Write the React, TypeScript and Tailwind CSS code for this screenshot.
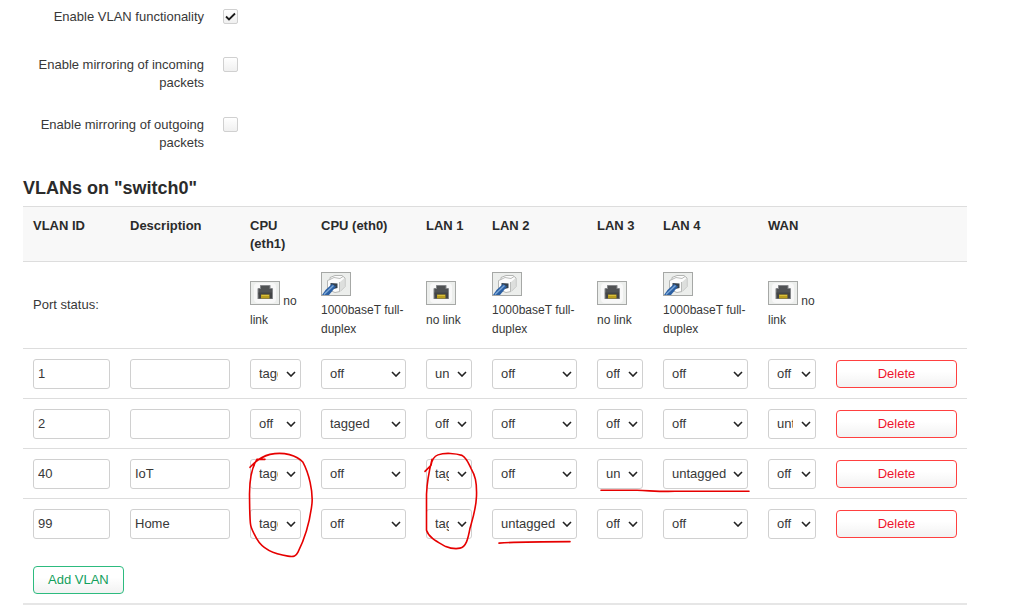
import { useState } from 'react';

const options = ['off', 'untagged', 'tagged'];

const mirrorSettings = [
    { id: 'enable-vlan', label: 'Enable VLAN functionality', checked: true },
    { id: 'mirror-in', label: 'Enable mirroring of incoming packets', checked: false },
    { id: 'mirror-out', label: 'Enable mirroring of outgoing packets', checked: false },
];

const ports = [
    { name: 'CPU (eth1)', up: false, inlineText: true },
    { name: 'CPU (eth0)', up: true },
    { name: 'LAN 1', up: false },
    { name: 'LAN 2', up: true },
    { name: 'LAN 3', up: false },
    { name: 'LAN 4', up: true },
    { name: 'WAN', up: false, inlineText: true },
];

const vlans = [
    { id: '1', description: '', ports: ['tagged', 'off', 'untagged', 'off', 'off', 'off', 'off'] },
    { id: '2', description: '', ports: ['off', 'tagged', 'off', 'off', 'off', 'off', 'untagged'] },
    { id: '40', description: 'IoT', ports: ['tagged', 'off', 'tagged', 'off', 'untagged', 'untagged', 'off'] },
    { id: '99', description: 'Home', ports: ['tagged', 'off', 'tagged', 'untagged', 'off', 'off', 'off'] },
];

function PortDownIcon() {
    return (
        <svg width="30" height="24" viewBox="0 0 30 24" className="inline-block align-baseline" aria-hidden="true">
            <rect x="0.5" y="0.5" width="29" height="23" fill="#eceeec" stroke="#a6a8a6" />
            <rect x="4" y="2" width="22" height="20" rx="4" fill="#f8f8f8" />
            <path d="M10 4.500q0-.5.500-.5h9.500q.5 0 .5.500V7h1.500q1 0 1 1v10h-15.500V8q0-1 1-1H10z" fill="#85878a" />
            <path d="M11 5h8.500v3h2.500v5.500H8.500V8H11z" fill="#505254" />
            <path d="M8.500 11.500h13.500v6H8.500z" fill="#434446" />
            <path d="M11 13.500h8.500v4H11z" fill="#b99d1e" />
            <path d="M11.500 14.500h7.500" stroke="#d9bf3c" />
        </svg>
    );
}

function PortUpIcon() {
    return (
        <svg width="30" height="24" viewBox="0 0 30 24" className="block" aria-hidden="true">
            <rect x="0.5" y="0.5" width="29" height="23" fill="#eceeec" stroke="#a6a8a6" />
            <path d="M6.500 10V8.500L9 7.500V5.500l5-2 7 0 3 2.500v8.500l-5 5-5 1-7.500-3z" fill="#fcfcfc" stroke="#b4b6b4" />
            <path d="M18.500 10.500l4.500-4v8l-4.500 5z" fill="#dddfdd" />
            <path d="M9 7.500l4-2 6 1 3-2M18.500 10v9" fill="none" stroke="#b9bbb9" />
            <path d="M9.500 11l7 .5v4.500l-4 1-3-2z" fill="#35404c" />
            <path d="M1 23l3.500-5L11 12l4 2.500L8 23z" fill="#2a5fa3" />
            <path d="M3 22.500l9.500-9" stroke="#7ba6d6" strokeWidth="1.500" />
        </svg>
    );
}

function PortStatus({ up, inlineText }: { up: boolean; inlineText?: boolean }) {
    if (up) {
        return (
            <>
                <PortUpIcon />
                <div className="pt-[5px]">1000baseT full-<br />duplex</div>
            </>
        );
    }
    return (
        <div className="whitespace-nowrap">
            <PortDownIcon />
            {inlineText ? <> no<br />link</> : <><br />no link</>}
        </div>
    );
}

function PortSelect({ value, label, narrow }: { value: string; label: string; narrow: boolean }) {
    return (
        <div className="relative">
            <select
                aria-label={label}
                defaultValue={value}
                className={`block h-[30px] w-full appearance-none rounded-[3px] border border-[#d0d0d0] bg-white pl-2 text-[#383838] ${narrow ? 'pr-[22px]' : 'pr-4'}`}
            >
                {options.map((option) => (
                    <option key={option} value={option}>{option}</option>
                ))}
            </select>
            <svg
                width="10"
                height="6"
                viewBox="0 0 10 6"
                className="pointer-events-none absolute right-[5px] top-3"
                aria-hidden="true"
            >
                <path d="M1 1l4 4 4-4" fill="none" stroke="#222" strokeWidth="1.6" />
            </svg>
        </div>
    );
}

function SettingRow({ id, label, checked }: { id: string; label: string; checked: boolean }) {
    const [on, setOn] = useState(checked);

    return (
        <div className="flex min-h-6 items-start gap-[19px]">
            <label htmlFor={id} className="w-[181px] text-right">{label}</label>
            <span className="relative mt-px">
                <input
                    id={id}
                    type="checkbox"
                    checked={on}
                    onChange={(e) => setOn(e.target.checked)}
                    className="block size-[15px] appearance-none rounded-[2px] border border-[#d0d0d0] bg-linear-to-b from-white to-[#f0f0f0]"
                />
                {on && (
                    <svg width="15" height="15" viewBox="0 0 15 15" className="pointer-events-none absolute inset-0" aria-hidden="true">
                        <path d="M3 7.5l3 3 6-6" fill="none" stroke="#1c1c1c" strokeWidth="1.8" />
                    </svg>
                )}
            </span>
        </div>
    );
}

// Red pen marks over the port columns
function Markup() {
    return (
        <svg
            viewBox="23 206 944 398"
            preserveAspectRatio="none"
            className="pointer-events-none absolute inset-0 h-full w-full"
            fill="none"
            stroke="#e60000"
            strokeWidth="1.6"
            strokeLinecap="round"
            aria-hidden="true"
        >
            <path d="M250 468C256 461 262 457 270 455C284 452 297 456 303 463C309 474 313 492 312 504C310 522 304 541 298 553C296 557 294 558 288 557C274 555 262 549 257 540C249 526 250 528 249.500 495C249.500 477 253 466 257 460L265 460" />
            <path d="M425 472L431 466C432 460 434 457 438 455.500C445 453 456 454 462 456C467 459 468 463 471 469C475 476 477 482 476.500 497C476 510 472 522 470 529C468 540 466 548 460 549C456 550 450 549 445 547C438 543 429 539 426.500 531L426.500 495C427 482 429 472 432 460" />
            <path d="M601 491H637C652 491.500 660 492.500 675 492H749" />
            <path d="M499 544C520 542.500 535 542.500 570 542.500" />
        </svg>
    );
}

const inputClass = 'block h-[30px] w-full rounded-[3px] border border-[#d0d0d0] bg-white px-1 text-[#383838]';

export default function App() {
    return (
        <main className="bg-white pt-2 pr-[68px] pl-[23px] font-['Liberation_Sans',Arial,sans-serif] text-[13px] leading-[18px] text-[#383838]">
            <div className="flex flex-col gap-6">
                {mirrorSettings.map((setting) => (
                    <SettingRow key={setting.id} {...setting} />
                ))}
            </div>

            <h3 className="mt-[18px] text-[18px] leading-9 font-bold text-[#2b2b2b]">VLANs on "switch0"</h3>

            <div className="relative border-b-2 border-[#e6e6e6]">
                <table className="w-full table-fixed border-separate border-spacing-0">
                    <colgroup>
                        <col className="w-[97px]" />
                        <col className="w-[120px]" />
                        <col className="w-[71px]" />
                        <col className="w-[105px]" />
                        <col className="w-[66px]" />
                        <col className="w-[105px]" />
                        <col className="w-[66px]" />
                        <col className="w-[105px]" />
                        <col className="w-[68px]" />
                        <col className="w-[141px]" />
                    </colgroup>
                    <thead>
                        <tr className="bg-[#f8f8f8] text-left align-top text-[#2b2b2b] *:border-t *:border-[#ddd] *:px-2.5 *:pt-2.5 *:pb-2">
                            <th>VLAN ID</th>
                            <th>Description</th>
                            {ports.map((port) => (
                                <th key={port.name}>{port.name}</th>
                            ))}
                            <td></td>
                        </tr>
                    </thead>
                    <tbody>
                        <tr className="h-[87px] *:border-t *:border-[#ddd] *:px-2.5">
                            <td colSpan={2}>Port status:</td>
                            {ports.map((port) => (
                                <td key={port.name} className="text-[12px] leading-[19px]">
                                    <PortStatus up={port.up} inlineText={port.inlineText} />
                                </td>
                            ))}
                            <td></td>
                        </tr>
                        {vlans.map((vlan) => (
                            <tr key={vlan.id} className="h-[50px] *:border-t *:border-[#ddd] *:px-2.5">
                                <td>
                                    <input type="text" aria-label="VLAN ID" defaultValue={vlan.id} className={inputClass} />
                                </td>
                                <td>
                                    <input type="text" aria-label="Description" defaultValue={vlan.description} className={inputClass} />
                                </td>
                                {vlan.ports.map((value, index) => (
                                    <td key={index}>
                                        <PortSelect
                                            value={value}
                                            label={`${ports[index].name}, VLAN ${vlan.id}`}
                                            narrow={!ports[index].up}
                                        />
                                    </td>
                                ))}
                                <td>
                                    <button
                                        type="button"
                                        className="block h-7 w-full rounded-[4px] border border-[#ff4040] bg-linear-to-b from-white from-40% to-[#f2f2f2] text-[#f0142f]"
                                    >
                                        Delete
                                    </button>
                                </td>
                            </tr>
                        ))}
                    </tbody>
                </table>
                <div className="px-2.5 pt-[18px] pb-[9px]">
                    <button
                        type="button"
                        className="block h-7 rounded-[4px] border border-[#2dbb7f] bg-linear-to-b from-white from-40% to-[#f2f2f2] px-3.5 text-[#12a05c]"
                    >
                        Add VLAN
                    </button>
                </div>
                <Markup />
            </div>
        </main>
    );
}
